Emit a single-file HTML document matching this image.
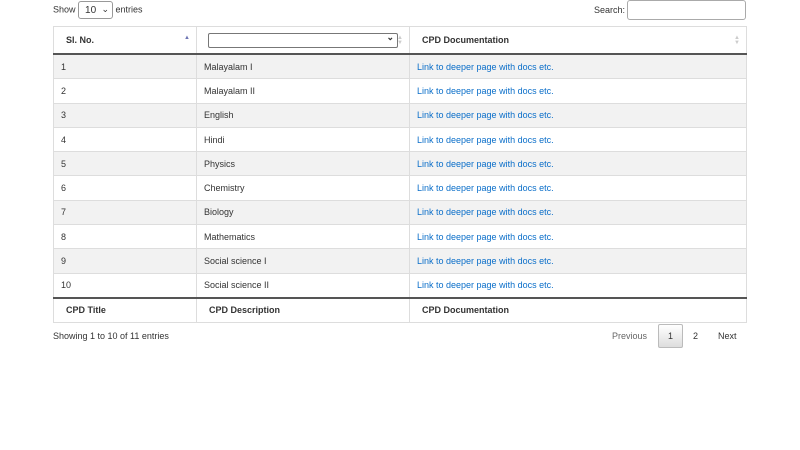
<!DOCTYPE html>
<html><head><style>
body{margin:0;width:800px;height:450px;background:#fff;font-family:"Liberation Sans",sans-serif;font-size:9px;color:#333;position:relative;overflow:hidden}
.abs{position:absolute}
table{position:absolute;left:53px;top:26px;width:694px;border-collapse:collapse;border:1px solid #ddd}
td,th{border:1px solid #ddd;padding:0 7px;height:23.3px;text-align:left;position:relative}
thead th{height:26px;border-bottom:2px solid #555;font-weight:bold;padding-left:12px}
tfoot th{height:23px;border-top:2px solid #555;font-weight:bold;padding-left:12px}
tbody tr:nth-child(odd) td{background:#f2f2f2}
a{color:#0a6ec9;text-decoration:none}
.sort{position:absolute;right:6px;top:9px;font-size:6px;line-height:5px;color:#ccc}
</style></head><body>
<div class="abs" style="left:53px;top:1px">Show <span style="display:inline-block;border:1px solid #999;border-radius:3px;width:35px;height:18px;line-height:17px;padding-left:6px;box-sizing:border-box;vertical-align:middle;position:relative;font-size:10px">10<span style="position:absolute;right:3px;top:-1px;font-size:9px">&#8964;</span></span> entries</div>
<div class="abs" style="left:594px;top:5px">Search:</div>
<div class="abs" style="left:627px;top:0;width:119px;height:20px;border:1px solid #aaa;border-radius:3px;box-sizing:border-box"></div>
<table>
<colgroup><col style="width:143px"><col style="width:213px"><col></colgroup>
<thead><tr><th>Sl. No.<span class="sort" style="color:#6f76b4">&#9650;</span></th><th style="padding-left:11px"><div style="width:188px;height:13px;border:1px solid #777;border-radius:2px;position:relative"><span style="position:absolute;right:3px;top:-2px;font-size:9px">&#8964;</span></div><span class="sort">&#9650;<br>&#9660;</span></th><th>CPD Documentation<span class="sort">&#9650;<br>&#9660;</span></th></tr></thead>
<tbody>
<tr><td>1</td><td>Malayalam I</td><td><a>Link to deeper page with docs etc.</a></td></tr>
<tr><td>2</td><td>Malayalam II</td><td><a>Link to deeper page with docs etc.</a></td></tr>
<tr><td>3</td><td>English</td><td><a>Link to deeper page with docs etc.</a></td></tr>
<tr><td>4</td><td>Hindi</td><td><a>Link to deeper page with docs etc.</a></td></tr>
<tr><td>5</td><td>Physics</td><td><a>Link to deeper page with docs etc.</a></td></tr>
<tr><td>6</td><td>Chemistry</td><td><a>Link to deeper page with docs etc.</a></td></tr>
<tr><td>7</td><td>Biology</td><td><a>Link to deeper page with docs etc.</a></td></tr>
<tr><td>8</td><td>Mathematics</td><td><a>Link to deeper page with docs etc.</a></td></tr>
<tr><td>9</td><td>Social science I</td><td><a>Link to deeper page with docs etc.</a></td></tr>
<tr><td>10</td><td>Social science II</td><td><a>Link to deeper page with docs etc.</a></td></tr>
</tbody>
<tfoot><tr><th>CPD Title</th><th>CPD Description</th><th>CPD Documentation</th></tr></tfoot>
</table>
<div class="abs" style="left:53px;top:331px">Showing 1 to 10 of 11 entries</div>
<div class="abs" style="left:612px;top:331px;color:#666">Previous</div>
<div class="abs" style="left:658px;top:324px;width:25px;height:24px;border:1px solid #bbb;border-radius:2px;background:linear-gradient(#fff,#ddd);box-sizing:border-box;text-align:center;line-height:22px">1</div>
<div class="abs" style="left:693px;top:331px">2</div>
<div class="abs" style="left:718px;top:331px">Next</div>
</body></html>
